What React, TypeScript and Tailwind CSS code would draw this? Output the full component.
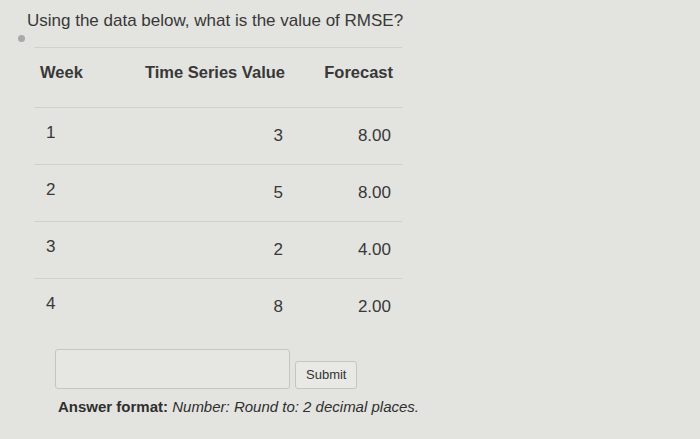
const rows = [
  { week: "1", value: "3", forecast: "8.00" },
  { week: "2", value: "5", forecast: "8.00" },
  { week: "3", value: "2", forecast: "4.00" },
  { week: "4", value: "8", forecast: "2.00" },
];

export default function App() {
  return (
    <div className="relative h-[439px] w-[700px] overflow-hidden bg-[#e3e3e0] font-['Liberation_Sans',Arial,sans-serif] text-[#383838]">
      <p className="pl-[27px] pt-[9px] text-[17px] leading-[24px]">
        Using the data below, what is the value of RMSE?
      </p>
      <span className="absolute left-[18px] top-[35px] h-[7px] w-[7px] rounded-full bg-[#a9a9a9]" />

      <div className="ml-[34px] mt-[14px] w-[368px]">
        <div className="flex h-[60px] items-center border-t border-[#d0d0cc] pb-[10px] text-[16.5px] font-bold">
          <div className="w-[100px] pl-[6px]">Week</div>
          <div className="w-[151px] text-right">Time Series Value</div>
          <div className="w-[108px] text-right">Forecast</div>
        </div>
        {rows.map((r) => (
          <div
            key={r.week}
            className="flex h-[57px] items-center border-t border-[#d0d0cc] text-[17px]"
          >
            <div className="-mt-[6px] w-[100px] pl-[12px]">{r.week}</div>
            <div className="w-[151px] pr-[2px] text-right">{r.value}</div>
            <div className="w-[106px] text-right">{r.forecast}</div>
          </div>
        ))}
      </div>

      <div className="ml-[55px] mt-[14px] flex items-end gap-[5px]">
        <div className="h-[40px] w-[235px] rounded-[3px] border border-[#c4c4c0] bg-[#e6e6e3]" />
        <button className="h-[28px] rounded-[3px] border border-[#c4c4c0] bg-[#e8e8e5] px-[10px] text-[13px] text-[#333]">
          Submit
        </button>
      </div>
      <p className="ml-[58px] mt-[7px] text-[15px] text-[#2f2f2f]">
        <span className="font-bold">Answer format:</span>{" "}
        <span className="italic">Number: Round to: 2 decimal places.</span>
      </p>
    </div>
  );
}
